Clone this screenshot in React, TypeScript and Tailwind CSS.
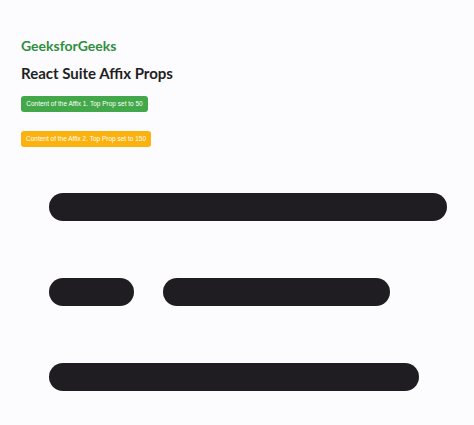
export default function App() {
  return (
    <div className="min-h-[425px] w-full bg-[#fcfbfd] font-['Lato','Liberation_Sans',sans-serif]">
      <div className="pl-[21px] pt-[37px]">
        <h2 className="text-[14px] font-bold leading-[18px] text-[#2f8f3e]">GeeksforGeeks</h2>
        <h3 className="mt-[8px] text-[15px] font-bold leading-[20px] text-[#1f1f22]">React Suite Affix Props</h3>
        <div className="mt-[13px] flex flex-col items-start gap-[19px] font-['Liberation_Sans',Arial,sans-serif]">
          <div className="flex h-[16px] w-[127px] items-center justify-center rounded-[3px] bg-[#43a849] text-[6.5px] text-white">
            Content of the Affix 1. Top Prop set to 50
          </div>
          <div className="flex h-[16px] w-[130px] items-center justify-center rounded-[3px] bg-[#fbb20f] text-[6.5px] text-white">
            Content of the Affix 2. Top Prop set to 150
          </div>
        </div>
      </div>
      <div className="mt-[46px] flex flex-col gap-[57px] pl-[49px]">
        <div className="h-[28px] w-[398px] rounded-full bg-[#1f1d21]" />
        <div className="flex gap-[29px]">
          <div className="h-[28px] w-[85px] rounded-full bg-[#1f1d21]" />
          <div className="h-[28px] w-[227px] rounded-full bg-[#1f1d21]" />
        </div>
        <div className="h-[28px] w-[370px] rounded-full bg-[#1f1d21]" />
      </div>
    </div>
  )
}
